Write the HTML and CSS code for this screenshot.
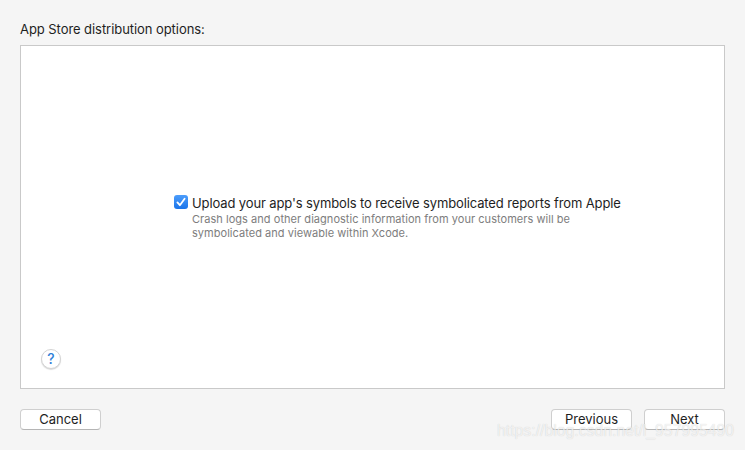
FILE: index.html
```html
<!DOCTYPE html>
<html lang="en">
<head>
  <meta charset="UTF-8">
  <title>App Store distribution options</title>
  <link rel="stylesheet" href="styles.css">
</head>
<body>
  <div class="sheet">
    <h1 class="title">App Store distribution options:</h1>

    <div class="panel">
      <div class="option">
        <span class="check">
          <svg width="14" height="14" viewBox="0 0 14 14"><path d="M3.4 7.4 L5.9 10.2 L10.6 3.8" fill="none" stroke="#fff" stroke-width="1.8" stroke-linecap="round" stroke-linejoin="round"/></svg>
        </span>
        <div class="option-text">
          <div class="option-label">Upload your app's symbols to receive symbolicated reports from Apple</div>
          <div class="option-note">Crash logs and other diagnostic information from your customers will be<br>symbolicated and viewable within Xcode.</div>
        </div>
      </div>
      <div class="help">?</div>
    </div>

    <div class="actions">
      <button class="btn">Cancel</button>
      <div class="actions-right">
        <button class="btn">Previous</button>
        <button class="btn">Next</button>
      </div>
    </div>
  </div>
  <div class="watermark">https://blog.csdn.net/l_957995490</div>
</body>
</html>
```

FILE: styles.css
```css
html, body {
  margin: 0;
  height: 100%;
}

body {
  position: relative;
  overflow: hidden;
  background-color: #f5f5f5;
  color: #1e1e1e;
  font-family: "Inter", "Liberation Sans", sans-serif;
  font-size: 13px;
}

.sheet {
  display: flex;
  flex-direction: column;
  height: 450px;
  box-sizing: border-box;
  padding: 21px 20px 20px;
}

.title {
  margin: 0 0 8px;
  height: 16px;
  font-size: 13px;
  line-height: 16px;
  font-weight: 400;
  letter-spacing: -0.06px;
}

.panel {
  display: flex;
  flex-direction: column;
  height: 344px;
  box-sizing: border-box;
  padding: 148px 20px 19px 20px;
  background-color: #fff;
  border: 1px solid #c9c9c9;
}

.option {
  display: flex;
  gap: 4px;
  margin-left: 133px;
}

.check {
  display: flex;
  align-items: center;
  justify-content: center;
  width: 14px;
  height: 14px;
  margin-top: 1px;
  background: linear-gradient(#4c9dfb, #1a74ea);
  border-radius: 3px;
}

.option-label {
  margin-top: 1px;
  line-height: 17px;
  letter-spacing: -0.12px;
}

.option-note {
  color: #7d7d7d;
  font-size: 11px;
  line-height: 14px;
  letter-spacing: 0.04px;
}

.help {
  width: 18px;
  height: 18px;
  margin-top: auto;
  background-color: #fff;
  border: 1px solid #d4d4d4;
  border-radius: 50%;
  box-shadow: 0 1px 1px rgba(0, 0, 0, 0.15);
  color: #2f7fd8;
  font-size: 14px;
  font-weight: 500;
  line-height: 18px;
  text-align: center;
}

.actions {
  display: flex;
  justify-content: space-between;
  margin-top: 20px;
}

.actions-right {
  display: flex;
  gap: 12px;
}

.btn {
  width: 81px;
  height: 21px;
  padding: 0 0 1px;
  background-color: #fff;
  border: 1px solid #cfcfcf;
  border-bottom-color: #b5b5b5;
  border-radius: 4px;
  color: #1e1e1e;
  font-family: inherit;
  font-size: 13px;
  line-height: 14px;
}

.watermark {
  position: absolute;
  left: 497px;
  top: 426px;
  color: rgba(255, 255, 255, 0.7);
  font-family: "Liberation Sans", sans-serif;
  font-size: 15.8px;
  line-height: 10px;
  white-space: nowrap;
  text-shadow: 0 0 1px rgba(0, 0, 0, 0.18);
}
```
